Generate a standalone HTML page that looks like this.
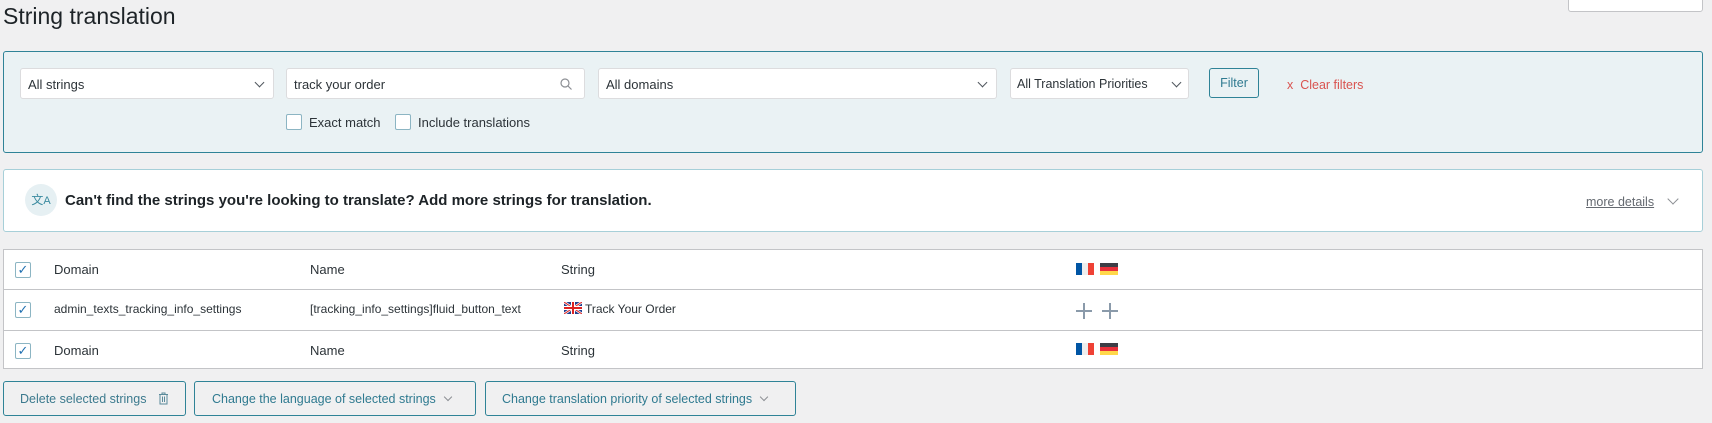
<!DOCTYPE html>
<html><head><style>
*{box-sizing:border-box;margin:0;padding:0}
body{width:1712px;height:423px;background:#f0f0f1;font-family:"Liberation Sans",sans-serif;color:#2c3338;position:relative;overflow:hidden;font-size:13px}
.a{position:absolute}
h1{position:absolute;left:3px;top:3px;font-size:23px;font-weight:400;color:#1d2327}
.so{left:1568px;top:-4px;width:135px;height:16px;background:#fff;border:1px solid #c3c4c7;border-radius:3px}
.panel{left:3px;top:51px;width:1700px;height:102px;background:#eaf2f4;border:1px solid #2f8397;border-radius:3px}
.sel{background:#fff;border:1px solid #dcdcde;border-radius:3px;height:31px;top:68px;padding:8px 7px;font-size:13px;color:#2c3338}
.chev{position:absolute;right:10px;top:10px;width:7px;height:7px;border-right:1.5px solid #50575e;border-bottom:1.5px solid #50575e;transform:rotate(45deg)}
.cb{width:16px;height:16px;background:#fff;border:1px solid #8cb5c3;border-radius:2px}
.btn{border:1px solid #2f8397;border-radius:3px;color:#2f7a90;font-size:12.5px}
.notice{left:3px;top:169px;width:1700px;height:63px;background:#fff;border:1px solid #a7cfd8;border-radius:3px}
.table{left:3px;top:249px;width:1700px;height:120px;background:#fff;border:1px solid #c3c4c7}
.row{position:absolute;left:0;width:100%;border-bottom:1px solid #c3c4c7}
.t{position:absolute;font-size:13px;color:#2c3338}
.ck{position:absolute;left:11px;width:16px;height:16px;border:1px solid #8cb5c3;border-radius:2px;color:#2271b1;font-size:13px;line-height:14px;text-align:center}
.fr{position:absolute;width:18px;height:12px;background:linear-gradient(90deg,#0055a4 33%,#eee 33%,#eee 66%,#ef4135 66%)}
.de{position:absolute;width:18px;height:12px;background:linear-gradient(#3d3d45 33%,#e8303a 33%,#e8303a 66%,#ffd84a 66%)}
.plus{position:absolute;width:16px;height:16px}
.plus:before{content:"";position:absolute;left:7px;top:0;width:2px;height:16px;background:#8a9aaa}
.plus:after{content:"";position:absolute;left:0;top:7px;width:16px;height:2px;background:#8a9aaa}
.bch{display:inline-block;width:6px;height:6px;border-right:1px solid #8c8f94;border-bottom:1px solid #8c8f94;transform:rotate(45deg);margin-left:9px;position:relative;top:-3px}
</style></head><body>
<h1>String translation</h1>
<div class="a so"></div>
<div class="a panel"></div>
<div class="a sel" style="left:20px;width:254px">All strings<span class="chev"></span></div>
<div class="a sel" style="left:286px;width:299px">track your order
<svg class="a" style="right:12px;top:9px" width="12" height="12" viewBox="0 0 12 12"><circle cx="5" cy="5" r="4" fill="none" stroke="#8c8f94" stroke-width="1.2"/><line x1="8" y1="8" x2="11.5" y2="11.5" stroke="#8c8f94" stroke-width="1.2"/></svg></div>
<div class="a sel" style="left:598px;width:399px">All domains<span class="chev"></span></div>
<div class="a sel" style="left:1010px;width:179px;padding-left:6px;font-size:12.5px">All Translation Priorities<span class="chev" style="right:8px"></span></div>
<div class="a btn" style="left:1209px;top:68px;width:50px;height:30px;padding-top:7px;text-align:center">Filter</div>
<div class="a" style="left:1287px;top:78px;color:#d9534f;font-size:12.5px">x&nbsp; Clear filters</div>
<div class="a cb" style="left:286px;top:114px"></div>
<div class="a" style="left:309px;top:115px;font-size:13px">Exact match</div>
<div class="a cb" style="left:395px;top:114px"></div>
<div class="a" style="left:418px;top:115px;font-size:13px">Include translations</div>

<div class="a notice"></div>
<div class="a" style="left:25px;top:184px;width:32px;height:32px;border-radius:50%;background:#e6f0f3;color:#3b8ba0;font-size:12px;text-align:center;line-height:32px">文<span style="font-size:11px">A</span></div>
<div class="a" style="left:65px;top:192px;font-size:15px;font-weight:bold;color:#1d2327">Can't find the strings you're looking to translate? Add more strings for translation.</div>
<div class="a" style="left:1586px;top:195px;font-size:12.5px;color:#646970;text-decoration:underline">more details</div>
<div class="a" style="left:1669px;top:195px;width:8px;height:8px;border-right:1px solid #8c8f94;border-bottom:1px solid #8c8f94;transform:rotate(45deg)"></div>

<div class="a table">
<div class="row" style="top:0;height:40px"></div>
<div class="row" style="top:40px;height:41px"></div>
<div class="ck" style="top:12px">✓</div>
<div class="t" style="left:50px;top:12px">Domain</div>
<div class="t" style="left:306px;top:12px">Name</div>
<div class="t" style="left:557px;top:12px">String</div>
<div class="fr" style="left:1072px;top:13px"></div><div class="de" style="left:1096px;top:13px"></div>
<div class="ck" style="top:52px">✓</div>
<div class="t" style="left:50px;top:52px;font-size:12px">admin_texts_tracking_info_settings</div>
<div class="t" style="left:306px;top:52px;font-size:12px">[tracking_info_settings]fluid_button_text</div>
<svg class="a" style="left:560px;top:52px" width="18" height="12" viewBox="0 0 18 12"><rect width="18" height="12" fill="#1f3f8f"/><path d="M0 0L18 12M18 0L0 12" stroke="#fff" stroke-width="2.5"/><path d="M0 0L18 12M18 0L0 12" stroke="#d22" stroke-width="1"/><path d="M9 0V12M0 6H18" stroke="#fff" stroke-width="4"/><path d="M9 0V12M0 6H18" stroke="#d22" stroke-width="2"/></svg>
<div class="t" style="left:581px;top:52px;font-size:12px">Track Your Order</div>
<div class="plus" style="left:1072px;top:53px"></div><div class="plus" style="left:1098px;top:53px"></div>
<div class="ck" style="top:93px">✓</div>
<div class="t" style="left:50px;top:93px">Domain</div>
<div class="t" style="left:306px;top:93px">Name</div>
<div class="t" style="left:557px;top:93px">String</div>
<div class="fr" style="left:1072px;top:93px"></div><div class="de" style="left:1096px;top:93px"></div>
</div>

<div class="a btn" style="left:3px;top:381px;width:183px;height:35px;padding:10px 0 0 16px;color:#3c7a8e">Delete selected strings
<svg style="position:absolute;left:154px;top:10px" width="11" height="13" viewBox="0 0 11 13"><path d="M1 2.5H10M4 2.5V1H7V2.5M2 2.5V12H9V2.5M4.5 4.5V10M6.5 4.5V10" fill="none" stroke="#5a8a9a" stroke-width="1"/></svg></div>
<div class="a btn" style="left:194px;top:381px;width:282px;height:35px;padding:10px 0 0 17px">Change the language of selected strings<span class="bch"></span></div>
<div class="a btn" style="left:485px;top:381px;width:311px;height:35px;padding:10px 0 0 16px">Change translation priority of selected strings<span class="bch"></span></div>
</body></html>
